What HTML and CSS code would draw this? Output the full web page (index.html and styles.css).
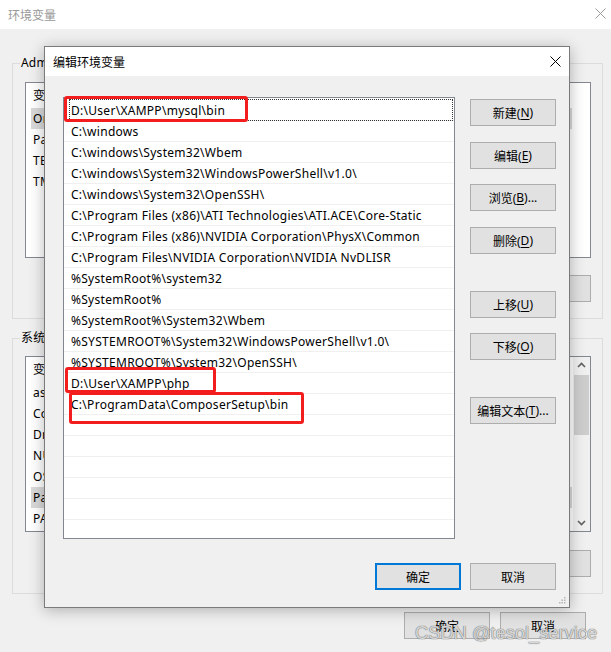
FILE: index.html
```html
<!DOCTYPE html>
<html lang="zh-CN">
<head>
<meta charset="utf-8">
<title>编辑环境变量</title>
<link rel="stylesheet" href="styles.css">
</head>
<body>
<div class="win">
  <div class="win-title">
    <span class="win-title-text">环境变量</span>
    <svg class="win-close" width="11" height="11" viewBox="0 0 11 11"><path d="M0.5 0.5L10.5 10.5M10.5 0.5L0.5 10.5" stroke="#9a9a9a" stroke-width="1" fill="none"/></svg>
  </div>
  <div class="win-body">
    <fieldset class="group group-user">
      <legend>Administrator 的用户变量(<u>U</u>)</legend>
      <div class="lv lv-user">
        <div class="lv-head">变量</div>
        <div class="lv-row sel">OneDrive</div>
        <div class="lv-row">Path</div>
        <div class="lv-row">TEMP</div>
        <div class="lv-row">TMP</div>
      </div>
      <div class="btn-row">
        <button class="btn">新建(<u>N</u>)...</button>
        <button class="btn">编辑(<u>E</u>)...</button>
        <button class="btn">删除(<u>D</u>)</button>
      </div>
    </fieldset>
    <fieldset class="group group-sys">
      <legend>系统变量(<u>S</u>)</legend>
      <div class="lv lv-sys">
        <div class="lv-rows">
          <div class="lv-head">变量</div>
          <div class="lv-row">asl.log</div>
          <div class="lv-row">ComSpec</div>
          <div class="lv-row">DriverData</div>
          <div class="lv-row">NUMBER_OF_PROCESSORS</div>
          <div class="lv-row">OS</div>
          <div class="lv-row sel">Path</div>
          <div class="lv-row">PATHEXT</div>
        </div>
        <div class="scrollbar">
          <svg class="sb-arrow" width="17" height="17" viewBox="0 0 17 17"><path d="M5 10L8.5 6.5L12 10" stroke="#606060" stroke-width="1.6" fill="none"/></svg>
          <div class="sb-track"><div class="sb-thumb"></div></div>
          <svg class="sb-arrow" width="17" height="17" viewBox="0 0 17 17"><path d="M5 7L8.5 10.5L12 7" stroke="#606060" stroke-width="1.6" fill="none"/></svg>
        </div>
      </div>
      <div class="btn-row">
        <button class="btn">新建(<u>W</u>)...</button>
        <button class="btn">编辑(<u>I</u>)...</button>
        <button class="btn">删除(<u>L</u>)</button>
      </div>
    </fieldset>
    <div class="win-footer">
      <button class="btn">确定</button>
      <button class="btn">取消</button>
    </div>
  </div>
</div>

<div class="dialog">
  <div class="dlg-title">
    <span>编辑环境变量</span>
    <svg class="dlg-close" width="11" height="11" viewBox="0 0 11 11"><path d="M0.5 0.5L10.5 10.5M10.5 0.5L0.5 10.5" stroke="#000" stroke-width="1" fill="none"/></svg>
  </div>
  <div class="dlg-body">
    <div class="dlg-main">
      <div class="plist">
        <div class="prow focus">D:\User\XAMPP\mysql\bin</div>
        <div class="prow">C:\windows</div>
        <div class="prow">C:\windows\System32\Wbem</div>
        <div class="prow">C:\windows\System32\WindowsPowerShell\v1.0\</div>
        <div class="prow">C:\windows\System32\OpenSSH\</div>
        <div class="prow">C:\Program Files (x86)\ATI Technologies\ATI.ACE\Core-Static</div>
        <div class="prow">C:\Program Files (x86)\NVIDIA Corporation\PhysX\Common</div>
        <div class="prow">C:\Program Files\NVIDIA Corporation\NVIDIA NvDLISR</div>
        <div class="prow">%SystemRoot%\system32</div>
        <div class="prow">%SystemRoot%</div>
        <div class="prow">%SystemRoot%\System32\Wbem</div>
        <div class="prow">%SYSTEMROOT%\System32\WindowsPowerShell\v1.0\</div>
        <div class="prow">%SYSTEMROOT%\System32\OpenSSH\</div>
        <div class="prow">D:\User\XAMPP\php</div>
        <div class="prow">C:\ProgramData\ComposerSetup\bin</div>
        <div class="prow"></div>
        <div class="prow"></div>
        <div class="prow"></div>
        <div class="prow"></div>
        <div class="prow"></div>
        <div class="prow"></div>
      </div>
      <div class="side-btns">
        <button class="btn">新建(<u>N</u>)</button>
        <button class="btn">编辑(<u>E</u>)</button>
        <button class="btn">浏览(<u>B</u>)...</button>
        <button class="btn">删除(<u>D</u>)</button>
        <button class="btn gap-lg">上移(<u>U</u>)</button>
        <button class="btn">下移(<u>O</u>)</button>
        <button class="btn gap-lg">编辑文本(<u>T</u>)...</button>
      </div>
    </div>
    <div class="dlg-footer">
      <button class="btn btn-default">确定</button>
      <button class="btn">取消</button>
    </div>
  </div>
  <svg class="grip" width="7" height="7" viewBox="0 0 7 7"><g fill="#b5b5b5"><rect x="5" y="0" width="1.5" height="1.5"/><rect x="2.5" y="2.5" width="1.5" height="1.5"/><rect x="5" y="2.5" width="1.5" height="1.5"/><rect x="0" y="5" width="1.5" height="1.5"/><rect x="2.5" y="5" width="1.5" height="1.5"/><rect x="5" y="5" width="1.5" height="1.5"/></g></svg>
</div>

<div class="mark mark-1"></div>
<div class="mark mark-2"></div>
<div class="mark mark-3"></div>

<div class="watermark">CSDN @tesol_service</div>
</body>
</html>
```

FILE: styles.css
```css
:root {
  --ui: "Noto Sans", "Noto Sans CJK SC", sans-serif;
}
* { box-sizing: border-box; }
html, body {
  margin: 0;
  padding: 0;
}
body {
  width: 611px;
  height: 652px;
  overflow: hidden;
  position: relative;
  background: #f0f0f0;
  font-family: var(--ui);
  font-size: 12px;
  color: #000;
}
u { text-decoration: underline; text-underline-offset: 2px; }

/* ---------- background window ---------- */
.win-title {
  height: 29px;
  background: #fff;
  display: flex;
  align-items: center;
  justify-content: space-between;
  padding: 0 5px 0 8px;
}
.win-title-text { color: #999; font-size: 12px; }
.win-close { display: block; margin-bottom: 2px; }

.win-body {
  padding: 26px 8px 0 12px;
}
.group {
  margin: 0;
  border: 1px solid #dcdcdc;
  padding: 0 11px 16px 7px;
  min-width: 0;
}
.group legend {
  padding: 0 1px;
  line-height: 16px;
  font-size: 12px;
  letter-spacing: 0.2px;
}
.group-sys { margin-top: 11px; }

.lv {
  margin: 11px 0 0 5px;
  height: 176px;
  background: #fff;
  border: 1px solid #828790;
  overflow: hidden;
}
.lv-sys { margin-top: 10px; display: flex; }
.lv-rows { flex: 1; min-width: 0; }
.lv-head {
  height: 25px;
  line-height: 25px;
  padding-left: 7px;
}
.lv-row {
  height: 21px;
  line-height: 21px;
  margin-left: 5px;
  padding-left: 2px;
  width: 541px;
  white-space: nowrap;
  letter-spacing: 0.28px;
}
.lv-row.sel { background: #d9d9d9; }

.scrollbar {
  width: 17px;
  background: #f0f0f0;
  display: flex;
  flex-direction: column;
}
.sb-arrow { display: block; flex: none; }
.sb-track { flex: 1; }
.sb-thumb { margin: 1px 1px 0 1px; height: 60px; background: #cdcdcd; }

.btn-row {
  display: flex;
  justify-content: flex-end;
  gap: 10px;
  margin-top: 17px;
}
.group-sys .btn-row { margin-top: 18px; }

.btn {
  width: 86px;
  height: 27px;
  padding: 0;
  background: #e1e1e1;
  border: 1px solid #adadad;
  font-family: var(--ui);
  font-size: 12px;
  color: #000;
  display: flex;
  align-items: center;
  justify-content: center;
  flex: none;
}

.win-footer {
  display: flex;
  justify-content: flex-end;
  gap: 10px;
  margin-top: 18px;
  padding-right: 17px;
}

/* ---------- dialog ---------- */
.dialog {
  position: absolute;
  left: 44px;
  top: 46px;
  width: 526px;
  height: 562px;
  background: #f0f0f0;
  border: 1px solid #7a7a7a;
  box-shadow: 0 2px 14px rgba(0, 0, 0, 0.28);
  display: flex;
  flex-direction: column;
}
.dlg-title {
  height: 29px;
  flex: none;
  background: #fff;
  display: flex;
  align-items: center;
  justify-content: space-between;
  padding: 0 8px 0 8px;
  font-size: 12px;
}
.dlg-close { display: block; margin-bottom: 1px; }
.dlg-body {
  flex: 1;
  display: flex;
  flex-direction: column;
  padding: 21px 13px 17px 18px;
}
.dlg-main {
  display: flex;
  gap: 15px;
}
.plist {
  width: 392px;
  height: 442px;
  background: #fff;
  border: 1px solid #828790;
  padding-top: 2px;
  overflow: hidden;
}
.prow {
  position: relative;
  height: 21px;
  padding-top: 2px;
  line-height: 18px;
  border-bottom: 1px solid #f0f0f0;
  padding-left: 7px;
  white-space: nowrap;
  letter-spacing: 0.28px;
}
.prow.focus::before {
  content: "";
  position: absolute;
  left: 5px;
  right: 1px;
  top: -1px;
  bottom: -1px;
  border: 1px dotted #333;
}
.side-btns {
  display: flex;
  flex-direction: column;
  padding-top: 2px;
}
.side-btns .btn + .btn { margin-top: 16px; }
.side-btns .btn:nth-child(3),
.side-btns .btn:nth-child(6) { margin-top: 15px; }
.side-btns .btn.gap-lg { margin-top: 37px; }

.dlg-footer {
  margin-top: auto;
  display: flex;
  justify-content: flex-end;
  gap: 9px;
}
.btn-default { border: 2px solid #0078d7; }

.grip {
  position: absolute;
  right: 3px;
  bottom: 3px;
}

/* ---------- annotation marks ---------- */
.mark {
  position: absolute;
  border: 3px solid #f41d1d;
  border-radius: 3px;
}
.mark-1 { left: 64px; top: 96px; width: 184px; height: 26px; }
.mark-2 { left: 65px; top: 367px; width: 151px; height: 26px; }
.mark-3 { left: 69px; top: 392px; width: 235px; height: 32px; }

.watermark {
  position: absolute;
  left: 415px;
  top: 621px;
  font-family: "Liberation Sans", Arial, sans-serif;
  font-size: 18.3px;
  line-height: 24px;
  color: rgba(250, 250, 250, 0.75);
  text-shadow: 0 0 1px #6a6a6a, 0 0 1px #6a6a6a;
  white-space: nowrap;
}
```
